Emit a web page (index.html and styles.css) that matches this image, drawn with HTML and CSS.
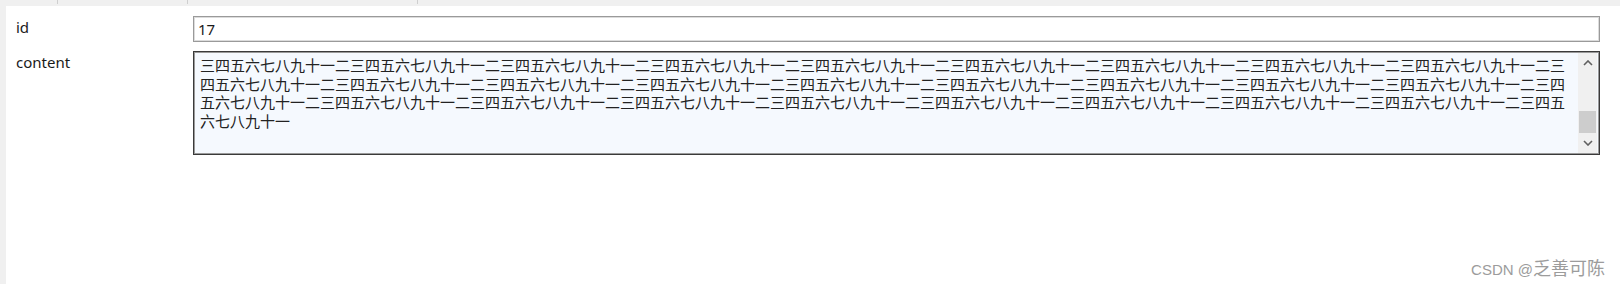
FILE: index.html
```html
<!DOCTYPE html>
<html lang="zh-CN">
<head>
<meta charset="utf-8">
<title>record</title>
<link rel="stylesheet" href="styles.css">
</head>
<body>
<div class="page">
  <div class="header-strip">
    <div class="hcell c1"></div>
    <div class="hcell c2"></div>
    <div class="hcell c3"></div>
    <div class="hcell rest"></div>
  </div>
  <div class="panel">
    <div class="form">
      <div class="row">
        <div class="label">id</div>
        <div class="input">17</div>
      </div>
      <div class="row">
        <div class="label">content</div>
        <div class="textarea">
          <div class="ta-text">三四五六七八九十一二三四五六七八九十一二三四五六七八九十一二三四五六七八九十一二三四五六七八九十一二三四五六七八九十一二三四五六七八九十一二三四五六七八九十一二三四五六七八九十一二三四五六七八九十一二三四五六七八九十一二三四五六七八九十一二三四五六七八九十一二三四五六七八九十一二三四五六七八九十一二三四五六七八九十一二三四五六七八九十一二三四五六七八九十一二三四五六七八九十一二三四五六七八九十一二三四五六七八九十一二三四五六七八九十一二三四五六七八九十一二三四五六七八九十一二三四五六七八九十一二三四五六七八九十一二三四五六七八九十一二三四五六七八九十一</div>
          <div class="scrollbar">
            <div class="sb-btn">
              <svg width="10" height="6" viewBox="0 0 10 6"><path d="M1 5 L5 1 L9 5" fill="none" stroke="#606060" stroke-width="1.6"/></svg>
            </div>
            <div class="sb-track"><div class="sb-thumb"></div></div>
            <div class="sb-btn">
              <svg width="10" height="6" viewBox="0 0 10 6"><path d="M1 1 L5 5 L9 1" fill="none" stroke="#606060" stroke-width="1.6"/></svg>
            </div>
          </div>
        </div>
      </div>
    </div>
    <div class="watermark">CSDN @<span class="wm-cjk">乏善可陈</span></div>
  </div>
</div>
</body>
</html>
```
FILE: styles.css
```css
html, body {
  margin: 0;
  padding: 0;
}
body {
  width: 1620px;
  height: 284px;
  overflow: hidden;
  background: #f0f0f0;
  font-family: "Noto Sans", "Noto Sans CJK SC", sans-serif;
  color: #1e1e1e;
}
.page {
  display: flex;
  flex-direction: column;
  height: 284px;
}
.header-strip {
  display: flex;
  height: 6px;
  flex: none;
}
.hcell {
  box-sizing: border-box;
  height: 4px;
  border-right: 1px solid #cfcfcf;
}
.c1 { width: 58px; }
.c2 { width: 130px; }
.c3 { width: 230px; }
.rest { flex: 1; border-right: none; }
.panel {
  position: relative;
  flex: 1;
  margin-left: 6px;
  background: #ffffff;
}
.form {
  display: flex;
  flex-direction: column;
  gap: 9px;
  padding: 10px 20px 0 10px;
}
.row {
  display: flex;
  align-items: flex-start;
}
.label {
  width: 177px;
  flex: none;
  font-size: 15px;
  line-height: 22px;
  color: #1a1a1a;
}
.input {
  flex: 1;
  box-sizing: border-box;
  height: 26px;
  border: 1px solid #9a9a9a;
  box-shadow: inset 0 0 0 1px #dcdcdc;
  padding: 0 4px;
  font-size: 15px;
  line-height: 24px;
  color: #1a1a1a;
}
.textarea {
  flex: 1;
  box-sizing: border-box;
  height: 104px;
  display: flex;
  border: 1px solid #3a3a3a;
  box-shadow: inset 0 0 0 1px #9a9a9a;
  background: #f5f9fe;
  padding: 1px;
}
.ta-text {
  flex: 1;
  padding: 3px 0 0 5px;
  font-family: "Noto Sans CJK SC", sans-serif;
  font-size: 15px;
  line-height: 18.5px;
  color: #222;
  overflow: hidden;
  word-break: break-all;
}
.scrollbar {
  flex: none;
  width: 19px;
  margin-right: 1px;
  background: #f0f0f0;
  display: flex;
  flex-direction: column;
}
.sb-btn {
  height: 20px;
  display: flex;
  align-items: center;
  justify-content: center;
  flex: none;
}
.sb-track {
  flex: 1;
  display: flex;
  flex-direction: column;
  justify-content: flex-end;
  padding: 0 1px 0 1px;
}
.sb-thumb {
  height: 22px;
  background: #cdcdcd;
}
.watermark {
  position: absolute;
  right: 15px;
  bottom: 4px;
  font-family: "Liberation Sans", sans-serif;
  font-size: 15px;
  line-height: 20px;
  color: #9c9c9c;
}
.wm-cjk {
  font-family: "Noto Sans CJK SC", sans-serif;
  font-size: 18px;
}
```
